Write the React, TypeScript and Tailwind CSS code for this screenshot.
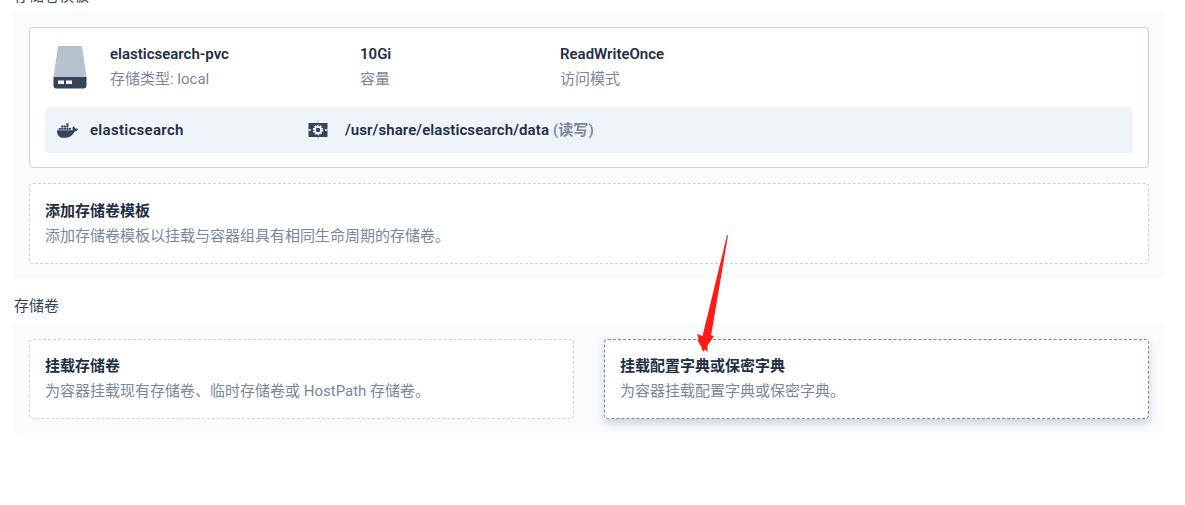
import { FaDocker } from "react-icons/fa";

const font = "font-['Roboto','Noto_Sans_CJK_SC',sans-serif]";

function Hdd() {
  return (
    <svg width="36" height="44" viewBox="0 0 36 44" className="shrink-0">
      <path d="M5 0H29L33.5 31H0.5Z" fill="#b6c2cd" />
      <path d="M0.5 31H33.5V39.5A3 3 0 0 1 30.5 42.5H3.5A3 3 0 0 1 0.5 39.5Z" fill="#36435c" />
      <rect x="5" y="34.5" width="6" height="3.5" fill="#fff" />
      <rect x="13" y="34.5" width="6" height="3.5" fill="#fff" />
    </svg>
  );
}

function Mount() {
  return (
    <svg width="20" height="20" viewBox="0 0 20 20" className="shrink-0">
      <rect x="9.3" y="0.5" width="1.4" height="19" fill="#b6c2cd" />
      <rect x="0.5" y="3" width="19" height="14" fill="#36435c" />
      <rect x="0.5" y="9.2" width="2.5" height="1.6" fill="#eff4f9" />
      <rect x="17" y="9.2" width="2.5" height="1.6" fill="#eff4f9" />
      <circle cx="10" cy="10" r="3.2" fill="none" stroke="#fff" strokeWidth="1.8" />
      <circle cx="10" cy="10" r="4.6" fill="none" stroke="#fff" strokeWidth="1.2" strokeDasharray="1.6 1.3" />
    </svg>
  );
}

function DashedCard({ title, desc, active, tall }: { title: string; desc: string; active?: boolean; tall?: boolean }) {
  return (
    <div
      className={`flex flex-col justify-center rounded-[4px] border border-dashed bg-white px-[15px] ${tall ? "h-[81px]" : "h-[80px]"} ${
        active ? "border-[#79879c] shadow-[0_4px_8px_0_rgba(36,46,66,0.2)]" : "border-[#ccd3db]"
      }`}
    >
      <div className="-mt-[1px] text-[15px] font-semibold leading-[20px] text-[#242e42]">{title}</div>
      <div className="mt-[5px] text-[15px] leading-[20px] text-[#79879c]">{desc}</div>
    </div>
  );
}

export default function App() {
  return (
    <div className={`${font} relative h-[505px] w-[1185px] overflow-hidden bg-white`}>
      <div className="-mt-[14px] px-[14px] pr-[21px]">
        <div className="h-[20px] text-[15px] leading-[20px] text-[#36435c]">存储卷模板</div>
        <div className="mt-[6px] rounded-[4px] bg-[#f9fbfd] p-[15px] pb-[14px]">
          <div className="rounded-[4px] border border-[#ccd3db] bg-white px-[15px] pt-[14px] pb-[14px]">
            <div className="flex h-[65px] items-start">
              <div className="ml-[8px] mt-[4px] w-[57px]">
                <Hdd />
              </div>
              <div className="w-[250px]">
                <div className="text-[15px] font-semibold leading-[24px] text-[#242e42]">elasticsearch-pvc</div>
                <div className="mt-[1px] text-[15px] leading-[24px] text-[#79879c]">存储类型: local</div>
              </div>
              <div className="w-[200px]">
                <div className="text-[15px] font-semibold leading-[24px] text-[#242e42]">10Gi</div>
                <div className="mt-[1px] text-[15px] leading-[24px] text-[#79879c]">容量</div>
              </div>
              <div>
                <div className="text-[15px] font-semibold leading-[24px] text-[#242e42]">ReadWriteOnce</div>
                <div className="mt-[1px] text-[15px] leading-[24px] text-[#79879c]">访问模式</div>
              </div>
            </div>
            <div className="flex h-[46px] items-center rounded-[4px] bg-[#eff4f9] pl-[12px] text-[15px] font-semibold text-[#242e42]">
              <FaDocker className="w-[21px] h-[21px] text-[#36435c] shrink-0" />
              <span className="ml-[12px] w-[218px] pt-[1px] tracking-[0.3px]">elasticsearch</span>
              <Mount />
              <span className="ml-[17px] pt-[1px] tracking-[0.1px]">
                /usr/share/elasticsearch/data <span className="text-[#79879c]">(读写)</span>
              </span>
            </div>
          </div>
          <div className="mt-[15px]">
            <DashedCard tall title="添加存储卷模板" desc="添加存储卷模板以挂载与容器组具有相同生命周期的存储卷。" />
          </div>
        </div>
        <div className="mt-[18px] h-[20px] text-[15px] leading-[20px] text-[#36435c]">存储卷</div>
        <div className="mt-[8px] grid grid-cols-2 gap-[30px] rounded-[4px] bg-[#f9fbfd] p-[15px] pb-[14px]">
          <DashedCard title="挂载存储卷" desc="为容器挂载现有存储卷、临时存储卷或 HostPath 存储卷。" />
          <DashedCard title="挂载配置字典或保密字典" desc="为容器挂载配置字典或保密字典。" active />
        </div>
      </div>
      <svg className="absolute left-[690px] top-[230px]" width="45" height="125" viewBox="0 0 45 125">
        <path d="M37 5L38 5.5L20 112L17.5 112L17.5 122L10 115L7 109Q14 114 16 110Z" fill="#ff1c14" />
        <path d="M37 5.5L19.5 105L24 106L13 122L7 104L12.5 106Z" fill="#ff1c14" />
      </svg>
    </div>
  );
}
